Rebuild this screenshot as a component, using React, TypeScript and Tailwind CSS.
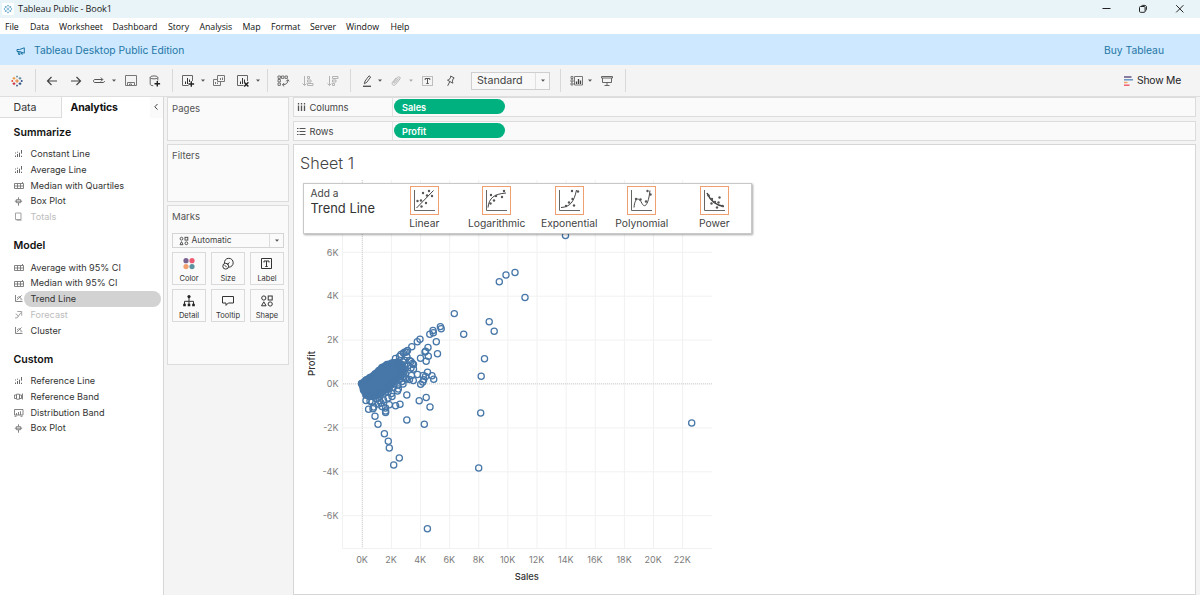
import { ReactNode } from "react";
import clsx from "clsx";

interface SvgProps {
  w?: number;
  h?: number;
  color?: string;
  sw?: number;
  className?: string;
  children: ReactNode;
}

function Svg({ w = 16, h = 16, color = "#555", sw = 1, className, children }: SvgProps) {
  return (
    <svg
      width={w}
      height={h}
      viewBox={`0 0 ${w} ${h}`}
      fill="none"
      stroke={color}
      strokeWidth={sw}
      className={clsx("shrink-0", className)}
    >
      {children}
    </svg>
  );
}

function Plus({ x, y, r, c }: { x: number; y: number; r: number; c: string }) {
  return <path d={`M${x - r} ${y}h${r * 2}M${x} ${y - r}v${r * 2}`} stroke={c} />;
}

function TableauLogo({ mono = false }: { mono?: boolean }) {
  const c = (color: string) => (mono ? "#4d9bc4" : color);
  return (
    <Svg w={16} h={16} sw={1} className={mono ? "h-3 w-3 bg-white" : ""}>
      <Plus x={8} y={8} r={1.8} c={c("#e8762d")} />
      <Plus x={5} y={5.3} r={1.4} c={c("#eb912c")} />
      <Plus x={11} y={5.3} r={1.4} c={c("#59879b")} />
      <Plus x={5} y={10.7} r={1.4} c={c("#c72035")} />
      <Plus x={11} y={10.7} r={1.4} c={c("#1f447e")} />
      <Plus x={8} y={3.6} r={1} c={c("#7199a6")} />
      <Plus x={8} y={12.6} r={1} c={c("#5c6692")} />
      <Plus x={3.3} y={8} r={0.9} c={c("#e8462d")} />
      <Plus x={12.7} y={8} r={0.9} c={c("#1f447e")} />
    </Svg>
  );
}

const Sep = ({ className }: { className: string }) => (
  <div className={clsx("h-[23px] w-px shrink-0 bg-[#d9d9d9]", className)} />
);

function Caret({ className, color = "#555" }: { className?: string; color?: string }) {
  return (
    <Svg w={4} h={3} className={className}>
      <path d="M0 .5h4L2 2.7z" fill={color} stroke="none" />
    </Svg>
  );
}

const menus = [
  { name: "File", width: "w-[25px]" },
  { name: "Data", width: "w-[29px]" },
  { name: "Worksheet", width: "w-[53.5px]" },
  { name: "Dashboard", width: "w-[55.5px]" },
  { name: "Story", width: "w-[31.5px]" },
  { name: "Analysis", width: "w-[43px]" },
  { name: "Map", width: "w-[28.5px]" },
  { name: "Format", width: "w-[39px]" },
  { name: "Server", width: "w-[36px]" },
  { name: "Window", width: "w-[44.5px]" },
  { name: "Help", width: "w-[30px]" },
];

function TitleBar() {
  return (
    <div className="flex h-[18px] items-center bg-[#e9f4f8] pl-0.5 font-['Open_Sans','Segoe_UI',sans-serif] text-[9.1px] tracking-[-0.1px] text-[#1a1a1a]">
      <TableauLogo mono />
      <span className="ml-[4px]">Tableau Public - Book1</span>
      <div className="mr-[15px] ml-auto flex items-center gap-[27px]">
        <Svg w={10} h={10} color="#222">
          <path d="M1.500 4.500h8" />
        </Svg>
        <Svg w={10} h={10} color="#222">
          <rect x="1.5" y="2.5" width="5.6" height="5.8" rx="1" />
          <path d="M3.3 2.3c.2-.6.6-.9 1.2-.9h2.4c.9 0 1.5.6 1.5 1.5v2.6c0 .6-.3 1-.9 1.2" />
        </Svg>
        <Svg w={10} h={10} color="#222">
          <path d="M1.2 1.2l7.2 7.2M8.4 1.2L1.2 8.4" />
        </Svg>
      </div>
    </div>
  );
}

function Toolbar() {
  return (
    <div className="flex h-[31px] items-center bg-[#f4f4f4]">
      <div className="ml-[9px]">
        <TableauLogo />
      </div>
      <Sep className="ml-[10px]" />
      <Svg className="ml-2" color="#444" sw={1.2}>
        <path d="M13 8H3.5M7.5 4L3.5 8l4 4" />
      </Svg>
      <Svg className="ml-2" color="#444" sw={1.2}>
        <path d="M3 8h9.5M8.5 4l4 4-4 4" />
      </Svg>
      <Svg className="ml-[7px]">
        <path d="M11.5 6.500H4c-1 0-1.500.6-1.500 1.500S3 9.500 4 9.500h8c1 0 1.500-.6 1.500-1.500M9.800 4.500l2 2-2 2" />
      </Svg>
      <Caret className="ml-[5px]" />
      <Svg className="ml-[7px]" color="#777">
        <path d="M2.5 2.5h11v10h-11zM4.5 12.500v-3h7v3M6.500 12.500v-1.500h2v1.500" />
      </Svg>
      <Svg className="ml-[7px]" color="#666">
        <ellipse cx="8" cy="4.4" rx="3.8" ry="1.5" />
        <path d="M4.2 4.4v6.8c0 .8 1.2 1.4 3 1.5M11.8 4.4v3.1" />
        <path d="M8.5 10.8h5.6M11.3 8v5.6" stroke="#222" strokeWidth="1.4" />
      </Svg>
      <Sep className="ml-[10px]" />
      <Svg className="ml-[7px]" color="#666">
        <path d="M8.5 12.5h-6v-10h10V8" />
        <path d="M5.5 11V8.5M7.500 11V5M9.500 9V6.500" stroke="#333" />
        <path d="M8.5 11h5.6M11.3 8.2v5.6" stroke="#222" strokeWidth="1.4" />
      </Svg>
      <Caret className="ml-[5px]" />
      <Svg className="ml-[6px]" color="#777">
        <path d="M6.5 2.500h7v6h-7zM6.500 6.500h-4v6h7v-4M9.500 7V5M11.500 7V4.500M4.500 11V9M6.500 11V9.500" />
      </Svg>
      <Svg className="ml-2" color="#666">
        <path d="M8.5 12.5h-6v-10h10V8" />
        <path d="M5.5 11V8.5M7.500 11V5M9.500 9V6.500" stroke="#333" />
        <path d="M9.2 9.2l4.2 4.2M13.4 9.2l-4.2 4.2" stroke="#222" strokeWidth="1.4" />
      </Svg>
      <Caret className="ml-[5px]" />
      <Sep className="ml-[7px]" />
      <Svg className="ml-[7px]" color="#666">
        <path d="M3 3h2.4v2.4H3zM6.5 3h2.4v2.4H6.5zM10 3h2.4v2.4H10zM3 6.5h2.4v2.4H3zM3 10h2.4v2.4H3z" strokeWidth=".9" />
        <path d="M12.8 6.8c.2 3.2-1.5 4.8-5 5M11.2 8.3l1.6-1.7 1.4 1.7M9.2 10l-1.8 1.8 1.8 1.6" />
      </Svg>
      <Svg className="ml-[9px]" color="#b3b3b3">
        <path d="M4.5 3v9.5M2.5 10.5l2 2 2-2M7.5 3.5h2v2h-2zM7.5 7H11v2H7.5zM7.5 10.5H13v2H7.5z" />
      </Svg>
      <Svg className="ml-[9px]" color="#b3b3b3">
        <path d="M4.5 3v9.5M2.5 10.5l2 2 2-2M7.5 3.5H13v2H7.5zM7.5 7H11v2H7.5zM7.5 10.5h2v2h-2z" />
      </Svg>
      <Sep className="ml-[9px]" />
      <Svg className="ml-2">
        <path d="M5.3 10.8l.8-2.8L10 2.800l1.700 1.200-3.800 5.200-2.600 1.600" />
        <path d="M4 13.300h8" strokeWidth="1.4" />
      </Svg>
      <Caret className="ml-[3px]" />
      <Svg className="ml-[6px]" color="#b5b5b5">
        <path d="M10.5 5.5L6.8 10c-.6.7-1.6-.1-1.1-.8l4-4.9c1.2-1.4 3.3.2 2.2 1.7L7.5 11.5c-1.6 2-4.5-.2-3-2.2l3.8-4.6" />
      </Svg>
      <Caret className="ml-[5px]" color="#aaa" />
      <Svg className="ml-[7px]">
        <rect x="2.5" y="3.5" width="10" height="9" strokeDasharray="1 1" stroke="#888" />
        <path d="M5.2 7V5.5h4.6V7M7.5 5.500v5M6.300 10.500h2.400" />
      </Svg>
      <Svg className="ml-[6px]">
        <path d="M8.7 3l3.500 2-1 .6-.8 2.600.5 2-5.400-3 1.700-.6 1.500-2.500zM7.700 8.800l-2 4" />
      </Svg>
      <div className="ml-[13px] flex h-[18px] w-[79px] shrink-0 items-center border border-[#cfcfcf] bg-[#f8f8f8]">
        <span className="flex-1 pt-[2px] pl-[5px] text-[10.7px] text-[#444]">Standard</span>
        <div className="flex h-full w-[14px] items-center justify-center border-l border-[#e0e0e0]">
          <Caret />
        </div>
      </div>
      <Sep className="ml-[10px]" />
      <Svg className="ml-2" color="#777">
        <path d="M2 3.5h2v2H2zM2 6.800h2v2H2zM2 10h2v2H2zM5.500 3.500h8V12h-8z" />
        <path d="M7.5 11V8.500M9.500 11V6M11.500 11V7.500" strokeWidth="1.3" stroke="#444" />
      </Svg>
      <Caret className="ml-[3px]" />
      <Svg className="ml-[7px]" color="#666">
        <path d="M2.5 3.500h11V5h-11zM3.500 5v4.500h9V5M8 9.500V12M5.500 12.500h5" />
      </Svg>
      <Sep className="ml-[10px]" />
      <div className="mr-[19px] ml-auto flex items-center gap-1">
        <Svg w={9} h={10} sw={1.4}>
          <path d="M0 1h7.5" stroke="#5b4a7d" />
          <path d="M0 3.8h9" stroke="#5f8fc0" />
          <path d="M0 6.5h3.5" stroke="#f3a25f" />
          <path d="M0 9.2h5.5" stroke="#ee5566" />
        </Svg>
        <span className="pt-px text-[10.3px] tracking-[-0.2px] text-[#222]">Show Me</span>
      </div>
    </div>
  );
}

type IconName = "line" | "grid" | "box" | "totals" | "trend" | "forecast" | "band" | "dist";

const analyticsIcons: Record<IconName, ReactNode> = {
  line: (
    <path d="M1.5 6.500V8M1.500 3.500v1M3.500 5v3M3.500 2.700v1M5.500 3.700V8M7.500 1v3.700M7.500 6.700V8" stroke="#555" />
  ),
  grid: <path d="M.5 2.500h9v5h-9zM.5 5h9M3.500 2.500v5M6.500 2.500v5M8.500 1v1.500" />,
  box: <path d="M4.5.3v2.200M4.500 6v2.700M2.300 2.700h4.400v3H2.300zM.8 4.200h7.400" />,
  totals: <path d="M1.5 1H7v6.500H1.500zM2.500 8.200h5" stroke="#999" />,
  trend: <path d="M1.5 1v6.500h7M2.800 6l4.700-4.500M3.200 3.200l1 1M4.500 2L8 5.500M7 6.300v-1" />,
  forecast: <path d="M1 8l2.300-.2L7 2.500M3.300 1.500h4.400v4.200M2 3.500l2.200 3" stroke="#999" />,
  band: <path d="M.5 3h2v3.500h-2zM2.500 2.200h3v5h-3zM5.500 3h2v3.500h-2zM8.500 1.500v6M7.500 4.700h1" />,
  dist: <path d="M.5 1.500H9V7H.5zM2.500 7V5M4.500 7V4M6.500 7V3.300M.5 8.300h2M6.500 8.300h2" />,
};

const groups: { title: string; items: { name: string; icon: IconName; disabled?: boolean; active?: boolean }[] }[] = [
  {
    title: "Summarize",
    items: [
      { name: "Constant Line", icon: "line" },
      { name: "Average Line", icon: "line" },
      { name: "Median with Quartiles", icon: "grid" },
      { name: "Box Plot", icon: "box" },
      { name: "Totals", icon: "totals", disabled: true },
    ],
  },
  {
    title: "Model",
    items: [
      { name: "Average with 95% CI", icon: "grid" },
      { name: "Median with 95% CI", icon: "grid" },
      { name: "Trend Line", icon: "trend", active: true },
      { name: "Forecast", icon: "forecast", disabled: true },
      { name: "Cluster", icon: "trend" },
    ],
  },
  {
    title: "Custom",
    items: [
      { name: "Reference Line", icon: "line" },
      { name: "Reference Band", icon: "band" },
      { name: "Distribution Band", icon: "dist" },
      { name: "Box Plot", icon: "box" },
    ],
  },
];

function AnalyticsPane() {
  return (
    <div className="w-[164px] shrink-0 border-r border-[#d6d6d6] bg-white">
      <div className="flex h-[21px] items-stretch">
        <div className="w-[62px] border-r border-b border-[#dcdcdc] bg-[#fafafa] pl-[13.5px] text-[10.6px] leading-[22px] text-[#333]">
          Data
        </div>
        <div className="flex-1 pl-[8.5px] text-[10.5px] leading-[21px] font-bold tracking-[-0.15px] text-[#111]">
          Analytics
        </div>
        <div className="flex w-[13px] items-center bg-[#fafafa]">
          <Svg w={6} h={8} className="mb-[2px] ml-[3px]" color="#444">
            <path d="M4.5 1L1.8 3.8l2.7 2.8" />
          </Svg>
        </div>
      </div>
      <div className="pt-[6px]">
        {groups.map((group) => (
          <div key={group.title} className="mb-[12.7px]">
            <h3 className="mb-[6px] h-4 pl-[13.5px] text-[10.6px] leading-[18px] font-semibold text-[#111]">
              {group.title}
            </h3>
            {group.items.map((item) => (
              <div key={item.name} className="flex h-[15.76px] items-center pl-[14px]">
                <Svg w={10} h={9} color="#777" sw={0.9}>
                  {analyticsIcons[item.icon]}
                </Svg>
                <div
                  className={clsx(
                    "h-[15.5px] w-[137px] rounded-full pl-[6.5px] text-[9.15px] leading-[16.5px] whitespace-nowrap",
                    item.active && "bg-[#d2d2d2]",
                    item.disabled ? "text-[#bcbcbc]" : "text-[#333]",
                  )}
                >
                  {item.name}
                </div>
              </div>
            ))}
          </div>
        ))}
      </div>
    </div>
  );
}

const markButtons: { name: string; icon: ReactNode }[] = [
  {
    name: "Color",
    icon: (
      <g stroke="none">
        <circle cx="5" cy="4.7" r="2.6" fill="#7a628f" />
        <circle cx="11" cy="4.7" r="2.6" fill="#ec5b72" />
        <circle cx="5" cy="10.6" r="2.6" fill="#f2a06d" />
        <circle cx="11" cy="10.6" r="2.6" fill="#5a929f" />
      </g>
    ),
  },
  {
    name: "Size",
    icon: (
      <>
        <path d="M4.5 7.2C4.2 4.5 6 2.3 8.7 2.3c2.6 0 4.5 1.9 4.5 4.4s-1.8 4.5-4.6 4.5" />
        <circle cx="5.7" cy="10.2" r="2.9" />
        <path d="M7 8.7l2.5-2.2M4.7 9.2l2 2" />
      </>
    ),
  },
  {
    name: "Label",
    icon: <path d="M2.5 2.5h10v10h-10zM5 6.500v-1.500h5v1.500M7.500 5v5.500M6.300 10.500h2.400" />,
  },
  {
    name: "Detail",
    icon: (
      <>
        <path d="M8 4.5v7M3.5 11V8.3h9V11" />
        <g fill="#222" stroke="none">
          <circle cx="8" cy="3.6" r="1.6" />
          <path d="M2.2 10.7h2.6v2.5H2.2zM6.7 10.7h2.6v2.5H6.7zM11.2 10.7h2.6v2.5h-2.6z" />
        </g>
      </>
    ),
  },
  { name: "Tooltip", icon: <path d="M2.5 3.500h11v6.500H8.300L6 12.400V10H2.500z" /> },
  {
    name: "Shape",
    icon: (
      <>
        <circle cx="4.8" cy="5" r="2.1" />
        <rect x="9.2" y="3" width="4" height="4" />
        <path d="M4.8 8.8l2.3 4H2.5z" />
        <circle cx="11.2" cy="11" r="2.1" />
      </>
    ),
  },
];

const Card = ({ title, className, children }: { title: string; className: string; children?: ReactNode }) => (
  <div className={clsx("border border-[#dcdcdc] bg-[#fafafa] px-1", className)}>
    <div className="h-[24px] text-[9.6px] leading-[22.5px] text-[#555]">{title}</div>
    {children}
  </div>
);

function Shelves() {
  return (
    <div className="w-[122px] shrink-0">
      <Card title="Pages" className="h-[44px]" />
      <Card title="Filters" className="mt-[3px] h-[58px]" />
      <Card title="Marks" className="mt-[3px] h-[160px]">
        <div className="mt-[3px] flex h-[15px] w-[112px] items-center border border-[#d4d4d4] text-[8.4px] text-[#444]">
          <Svg w={10} h={10} color="#444" sw={0.9} className="ml-[6px]">
            <circle cx="2.5" cy="2.7" r="1.4" />
            <rect x="6" y="1.3" width="2.8" height="2.8" />
            <path d="M2.5 5.6L4 8.7H1z" />
            <circle cx="7.4" cy="7.3" r="1.4" />
          </Svg>
          <span className="flex-1 pl-[2.5px]">Automatic</span>
          <div className="flex h-full w-[14px] items-center justify-center border-l border-[#dcdcdc]">
            <Caret />
          </div>
        </div>
        <div className="mt-[4px] grid w-[112px] grid-cols-3 gap-x-[5px] gap-y-[4px]">
          {markButtons.map((button) => (
            <div
              key={button.name}
              className="flex h-[33px] flex-col items-center border border-[#dadada] pt-[3px] text-[7.5px] leading-[13px] text-[#333]"
            >
              <Svg color="#333" className="h-4 w-4">
                {button.icon}
              </Svg>
              {button.name}
            </div>
          ))}
        </div>
      </Card>
    </div>
  );
}

function Shelf({ name, field, icon }: { name: string; field: string; icon: ReactNode }) {
  return (
    <div className="flex h-[20px] items-center border border-[#dcdcdc] bg-[#fafafa]">
      <div className="flex h-full w-[99px] items-center border-r border-[#e2e2e2] pl-[3px] text-[9.4px] text-[#444]">
        <Svg w={9} h={9} color="#555" sw={1}>
          {icon}
        </Svg>
        <span className="pt-[2px] pl-[3.5px]">{name}</span>
      </div>
      <div className="mb-px ml-px h-[15px] w-[111px] rounded-full bg-[#00b180] pl-2 text-[9.2px] leading-[17px] font-semibold text-white">
        {field}
      </div>
    </div>
  );
}

const models: { name: string; line: string; dots: number[][] }[] = [
  {
    name: "Linear",
    line: "M6.5 22L23.5 4.5",
    dots: [[7.5, 15], [11, 14.5], [13, 7], [19, 5], [17, 9.5], [22, 10], [16, 17], [11.5, 20.5]],
  },
  {
    name: "Logarithmic",
    line: "M6 21.5C7 12 12 8 24 7",
    dots: [[9, 9], [14, 10], [22, 5], [20, 11], [12, 14.5], [8.5, 17.5]],
  },
  {
    name: "Exponential",
    line: "M6 21.5C15 21 19 16 21.5 4",
    dots: [[17, 5], [23, 5.5], [17.5, 13], [14, 16.5], [11, 20], [19, 19.5]],
  },
  {
    name: "Polynomial",
    line: "M7 21.5C8 11 12 11 15 17.5C18 23 21.5 18 23 4.5",
    dots: [[9, 13], [13.5, 13.5], [20.5, 5], [23.5, 8.5], [19, 15.5]],
  },
  {
    name: "Power",
    line: "M7 7C11 16 16 19.5 24 20.5",
    dots: [[8.5, 9.5], [12, 13], [19.5, 11.5], [11.5, 17.5], [15, 16], [18.5, 16.5], [17, 21.5], [22.5, 20]],
  },
];

function TrendLineMenu() {
  return (
    <div className="absolute top-[38px] left-[9px] flex h-[51px] w-[449px] border border-[#c8c8c8] bg-white text-[#444] shadow-[1px_1px_2px_rgba(0,0,0,0.35)]">
      <div className="w-[84px] shrink-0 pt-[2px] pl-[6.5px]">
        <div className="text-[10.1px] leading-[15px]">Add a</div>
        <div className="text-[12.9px] leading-[16px] whitespace-nowrap text-[#333]">Trend Line</div>
      </div>
      {models.map((model) => (
        <div key={model.name} className="flex w-[72.5px] shrink-0 flex-col items-center pt-[2px] text-[10.3px] leading-[16px]">
          <svg width="29" height="29" viewBox="0 0 29 29" fill="none" className="shrink-0">
            <rect x=".5" y=".5" width="28" height="28" stroke="#f0a070" />
            <path d="M4.5 4v20.5H25" stroke="#666" />
            <path d={model.line} stroke="#444" strokeWidth={model.name === "Power" ? 1.5 : 1} />
            {model.dots.map(([x, y]) => (
              <circle key={`${x}-${y}`} cx={x} cy={y} r="1.2" fill="#555" />
            ))}
          </svg>
          {model.name}
        </div>
      ))}
    </div>
  );
}

// plot-space coordinates, one circle per customer
const points = [
  [565.5, 235.5], [499.3, 281.8], [506, 274.9], [515, 272.5], [525, 297.4], [454.3, 313.6],
  [489.2, 321.8], [494.2, 331.3], [463.7, 334.3], [484.5, 358.7], [481.2, 376.2], [480.7, 413],
  [478.7, 468], [691.7, 423], [427.4, 528.7], [440.4, 326.6], [441.2, 328.7], [433, 330.5],
  [433.3, 332.8], [429.8, 334.3], [436.3, 341.8], [437.5, 353.7], [420, 339.3], [417.3, 341.8],
  [411.8, 346.7], [428, 347.5], [425, 352], [425.6, 351.3], [428.3, 356.2], [426.2, 361.2],
  [420.5, 358.2], [427.5, 372.3], [432, 375.7], [433.7, 379.2], [423.3, 375.5], [425.5, 376.5],
  [417.5, 374.5], [420.7, 384.3], [422.8, 382], [423.7, 379.8], [413.3, 380.5], [411.5, 375.5],
  [411, 368], [413.5, 369], [412.5, 363.5], [409.5, 360.5], [411, 361.5], [413.5, 364.5],
  [406.8, 395], [419.2, 400.7], [426.2, 397.5], [430, 407], [406.8, 420], [424.3, 424.3],
  [399.3, 458], [393.7, 465], [389.3, 448], [388.3, 441.3], [384.4, 433.7], [378, 424.3],
  [375, 416.3], [368.6, 409.3], [373, 408.7], [373.7, 407], [366, 400.5], [370, 401], [372, 402],
  [385.6, 412.5], [385.6, 411], [385.6, 408], [389.3, 404.8], [395.6, 405.7], [400, 404.3],
  [378.5, 404], [381, 403], [382, 406.5], [379.5, 400.5], [383.5, 400], [388, 398], [392, 396.5],
  [397.5, 391], [398.3, 389], [403, 384], [391.5, 393.5], [388, 392], [393.5, 387], [398, 385],
  [395.5, 358.5], [399.5, 356.5], [401, 354.5], [403.5, 353], [405, 352], [406.5, 352], [407.5, 350.5],
  [407, 357], [403, 362], [407.5, 366], [405, 369], [405.5, 374], [406.5, 379], [403, 377], [401.5, 371],
  [402, 381.5], [399.5, 379.5], [409.5, 379.5], [401, 366], [405, 360.5], [405.5, 378],
  [404.5, 365], [404, 372], [400, 375], [397, 381], [394, 384], [389, 389], [385, 393], [380, 396.5], [376, 398.5],
];

// outline of the area where marks overlap completely
const cluster = [
  [361.5, 383.5], [366, 380], [370, 377.5], [375, 374], [379, 370.5], [382, 367.5], [387, 364.5], [392, 363],
  [398, 362], [402, 365], [403, 371], [400, 375.5], [395, 380], [391, 385], [387, 389], [381, 393], [375, 396],
  [370, 396.5], [366, 395], [363.5, 390],
];

const xTicks = Array.from({ length: 12 }, (_, i) => ({ x: 362.3 + i * 29.12, label: `${i * 2}K` }));
const yTicks = [6, 4, 2, 0, -2, -4, -6].map((v) => ({ y: 384 - v * 21.95, label: `${v}K` }));

function ScatterPlot() {
  return (
    <svg width="460" height="414" viewBox="294 180 460 414" fill="none">
      <g stroke="#f1f1f1">
        {xTicks.map((t) => (
          <path key={t.label} d={`M${t.x} 180V548`} />
        ))}
        {yTicks.map((t) => (
          <path key={t.label} d={`M343 ${t.y}H712`} />
        ))}
        <path d="M342.5 180V548.5H712" />
      </g>
      <path d="M362.3 180V548M343 383.8H712" stroke="#d2d2d2" strokeDasharray="1 1" />
      <g className="text-[9px]" fill="#7b7b7b">
        {xTicks.map((t) => (
          <text key={t.label} x={t.x - 0.3} y="562.5" textAnchor="middle">
            {t.label}
          </text>
        ))}
        {yTicks.map((t) => (
          <text key={t.label} x="338.5" y={t.y + 3.2} textAnchor="end">
            {t.label}
          </text>
        ))}
      </g>
      <g className="text-[9.3px] font-medium" fill="#333" textAnchor="middle">
        <text x="526.7" y="580">
          Sales
        </text>
        <text className="text-[9.6px]" transform="translate(314.5 363.5) rotate(-90)">
          Profit
        </text>
      </g>
      <g stroke="#4777a8" strokeWidth="1.25">
        <polygon
          points={cluster.map((p) => p.join(",")).join(" ")}
          fill="#4777a8"
          strokeWidth="7"
          strokeLinejoin="round"
        />
        {[...cluster, ...points].map(([x, y], i) => (
          <circle key={i} cx={x} cy={y} r="3.1" />
        ))}
      </g>
    </svg>
  );
}

export default function App() {
  return (
    <div className="flex h-[595px] w-[1200px] flex-col overflow-hidden bg-[#f4f4f4] font-[Inter,'Noto_Sans',sans-serif]">
      <TitleBar />
      <div className="flex h-4 items-center bg-white pt-[3px] pl-[5px] font-['Open_Sans','Segoe_UI',sans-serif] text-[8.8px] tracking-[-0.05px] text-[#111]">
        {menus.map((menu) => (
          <div key={menu.name} className={menu.width}>
            {menu.name}
          </div>
        ))}
      </div>
      <div className="flex h-[31px] items-center bg-[#cde8ff] pt-[2px] text-[10.3px] text-[#1f77a6]">
        <Svg w={10} h={10} color="#1f77a6" className="ml-[16px]">
          <path d="M1 3.5h2.500L8.300 1.800v5.400L3.500 5.500H1zM2 5.500l.7 3H4l-.3-3M5.500 6.300V8H7" />
        </Svg>
        <span className="ml-2">Tableau Desktop Public Edition</span>
        <span className="mr-[36px] ml-auto">Buy Tableau</span>
      </div>
      <Toolbar />
      <div className="h-px bg-[#dedede]" />
      <div className="flex min-h-0 flex-1">
        <AnalyticsPane />
        <div className="w-[3px] shrink-0" />
        <Shelves />
        <div className="mr-[4px] ml-[4px] flex min-w-0 flex-1 flex-col">
          <Shelf
            name="Columns"
            field="Sales"
            icon={<path d="M1.500 0v1.500M4.500 0v1.500M7.500 0v1.500M1.500 2.500V8M4.500 2.500V8M7.500 2.500V8" strokeWidth="1.3" />}
          />
          <div className="h-[4px]" />
          <Shelf
            name="Rows"
            field="Profit"
            icon={<path d="M0 1.500h1.500M0 4.500h1.500M0 7.500h1.500M2.500 1.500h6M2.500 4.500h6M2.500 7.500h6" strokeWidth="1.2" />}
          />
          <div className="relative mt-[3px] flex-1 border border-[#d6d6d6] bg-white">
            <div className="h-[35px] pl-[6px] text-[16.1px] leading-[37px] font-light text-[#444]">Sheet 1</div>
            <ScatterPlot />
            <TrendLineMenu />
          </div>
        </div>
      </div>
    </div>
  );
}
